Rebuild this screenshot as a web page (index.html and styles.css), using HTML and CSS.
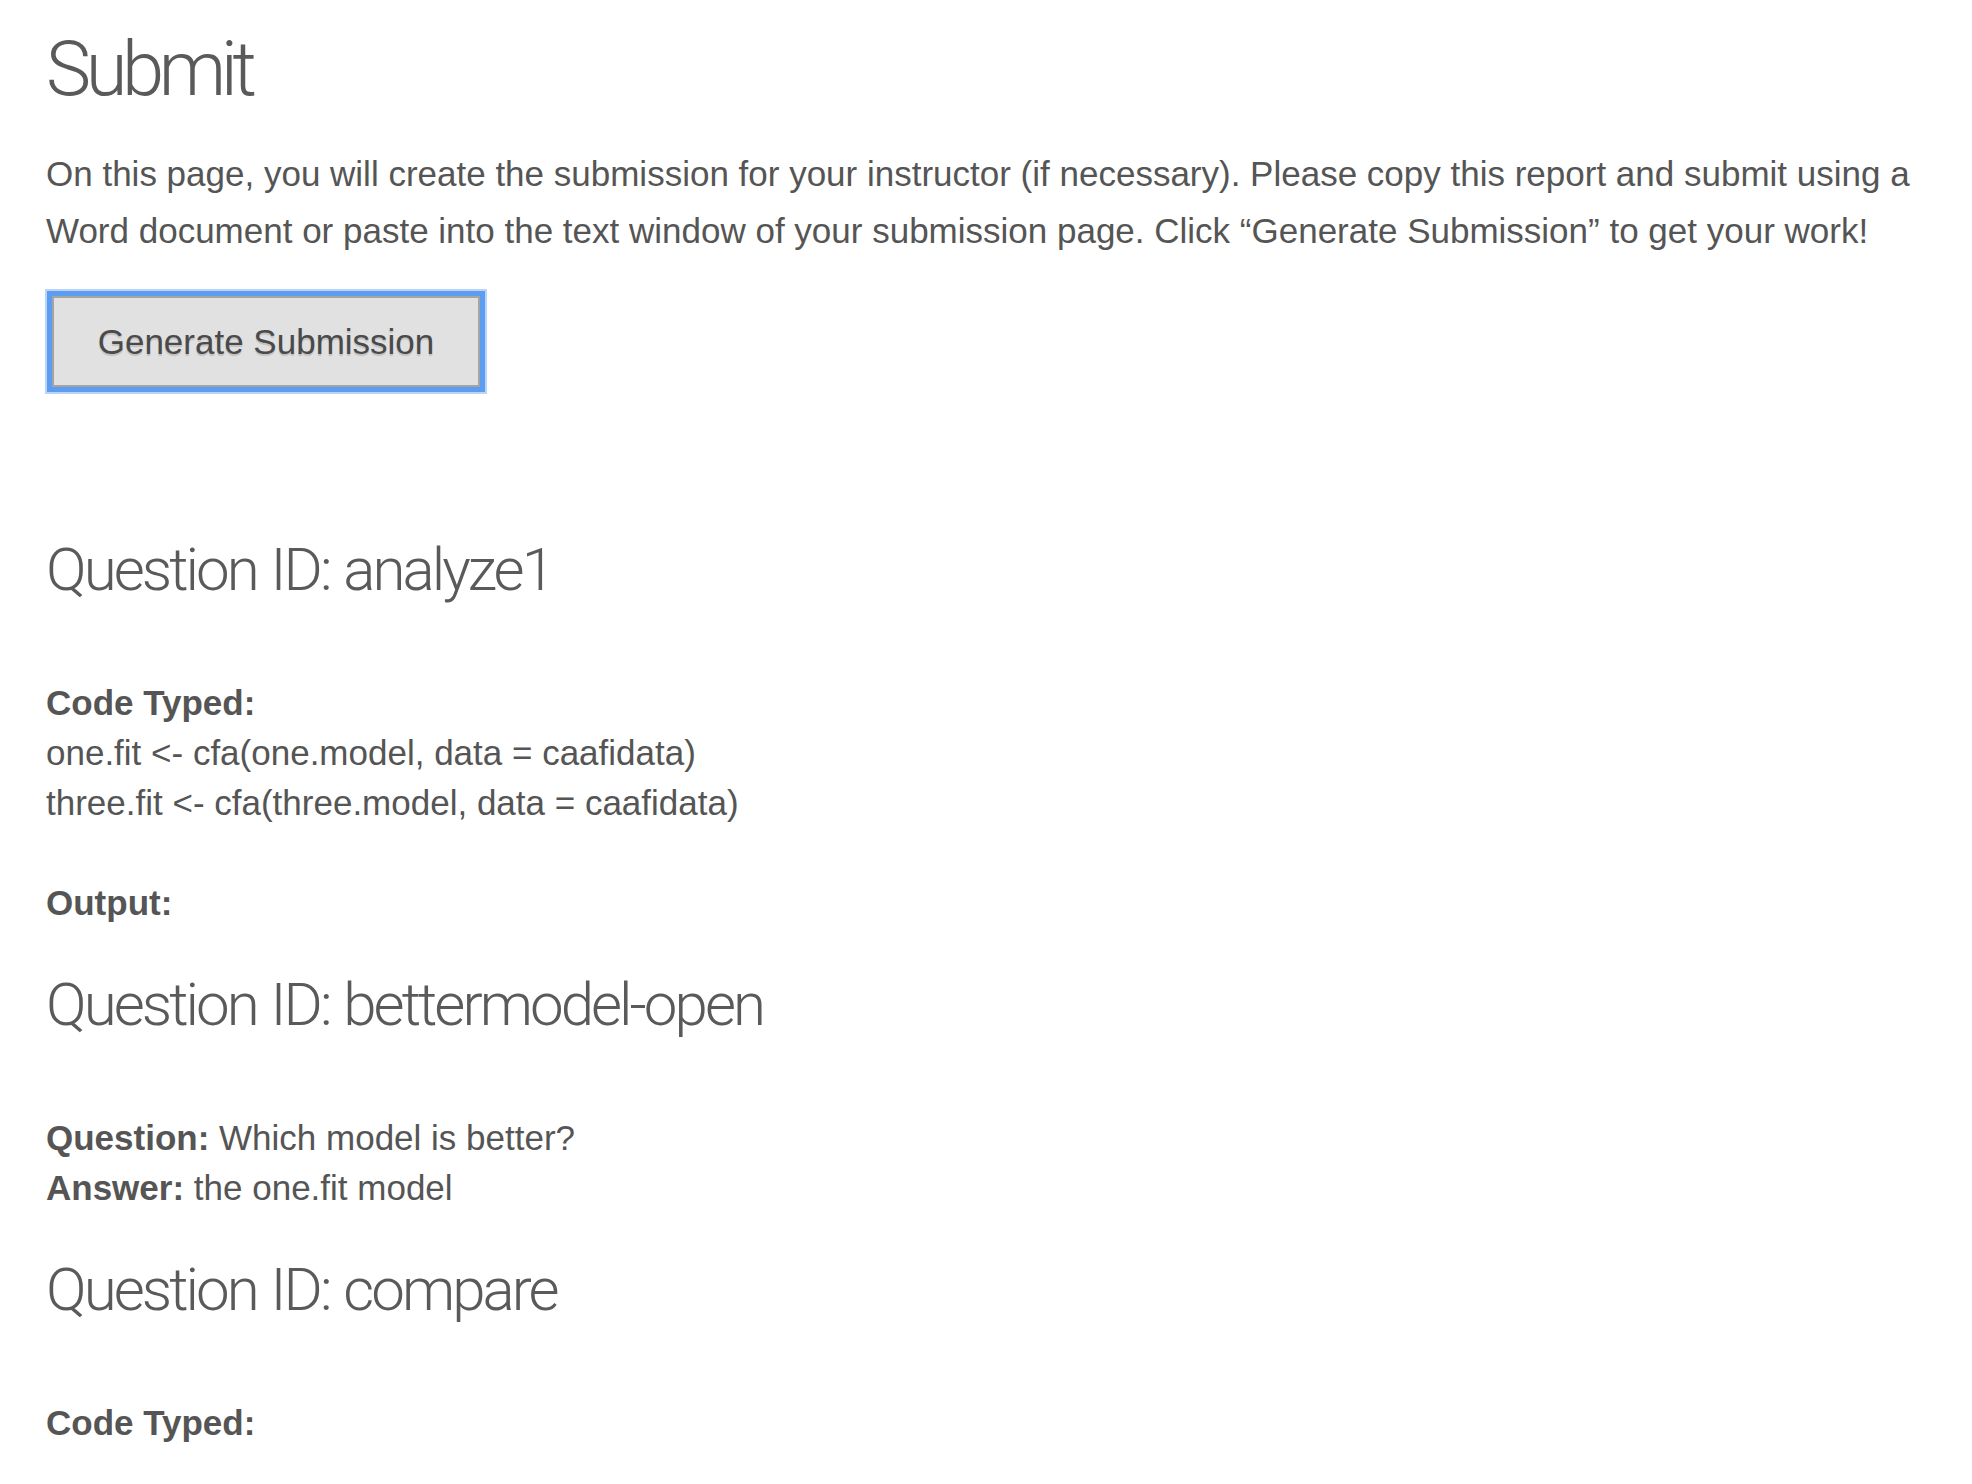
FILE: index.html
```html
<!DOCTYPE html>
<html lang="en">
<head>
<meta charset="utf-8">
<title>Submit</title>
<link rel="stylesheet" href="styles.css">
</head>
<body>
<main class="page">
  <h1 class="title">Submit</h1>
  <p class="intro">On this page, you will create the submission for your instructor (if necessary). Please copy this report and submit using a Word document or paste into the text window of your submission page. Click “Generate Submission” to get your work!</p>
  <button class="btn" type="button">Generate Submission</button>

  <section class="report">
    <div class="question">
      <h2 class="qid">Question ID: analyze1</h2>
      <p class="block"><strong>Code Typed:</strong><br>one.fit &lt;- cfa(one.model, data = caafidata)<br>three.fit &lt;- cfa(three.model, data = caafidata)</p>
      <p class="block"><strong>Output:</strong></p>
    </div>
    <div class="question">
      <h2 class="qid">Question ID: bettermodel-open</h2>
      <p class="block"><strong>Question:</strong> Which model is better?<br><strong>Answer:</strong> the one.fit model</p>
    </div>
    <div class="question">
      <h2 class="qid">Question ID: compare</h2>
      <p class="block"><strong>Code Typed:</strong></p>
    </div>
  </section>
</main>
</body>
</html>
```

FILE: styles.css
```css
html, body {
  margin: 0;
  padding: 0;
  background: #ffffff;
}

body {
  font-family: "Liberation Sans", Arial, Helvetica, sans-serif;
  color: #555555;
  font-size: 35px;
  line-height: 50px;
}

.page {
  padding: 27px 46px 0 46px;
}

.title {
  font-family: "Roboto", "Inter", sans-serif;
  font-weight: 300;
  font-size: 76px;
  line-height: 84px;
  letter-spacing: -5.4px;
  margin: 0;
  color: #5a5a5a;
}

.intro {
  margin: 34px 0 0 0;
  line-height: 57px;
}

.btn {
  display: block;
  margin: 37px 0 0 6px;
  width: 428px;
  height: 91px;
  padding: 0;
  background: #e1e1e1;
  border: 2px solid #a4a4a4;
  border-radius: 0;
  box-shadow: 0 0 0 5px #5c9cf1, 0 0 0 7px #bad5f8;
  font-family: "Liberation Sans", Arial, Helvetica, sans-serif;
  font-size: 35px;
  color: #4a4a4a;
  text-shadow: 0 2px 1px rgba(0, 0, 0, 0.14);
  cursor: pointer;
}

.report {
  margin-top: 150px;
}

.question + .question {
  margin-top: 44px;
}

.qid {
  font-family: "Roboto", "Inter", sans-serif;
  font-weight: 300;
  font-size: 60px;
  line-height: 66px;
  letter-spacing: -2.95px;
  word-spacing: 2px;
  margin: 0 0 75px 0;
  color: #5a5a5a;
}

.block {
  margin: 0 0 50px 0;
}

.question .block:last-child {
  margin-bottom: 0;
}

.block strong {
  font-weight: 700;
}
```
